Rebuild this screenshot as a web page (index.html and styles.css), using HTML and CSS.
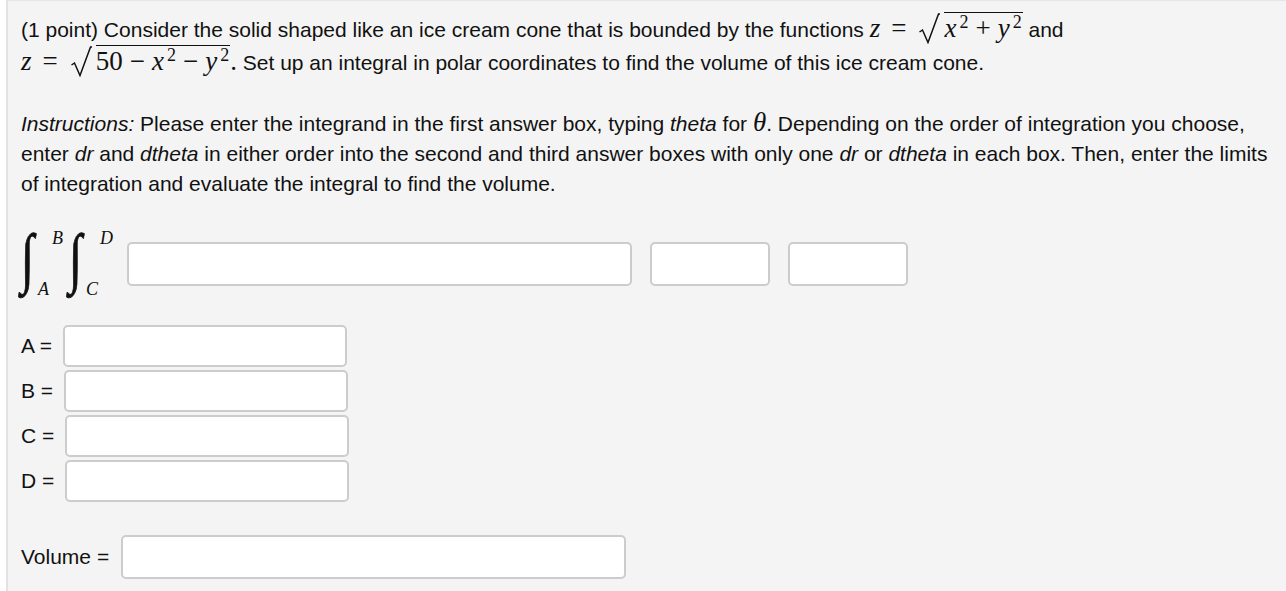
FILE: index.html
```html
<!DOCTYPE html>
<html>
<head>
<meta charset="utf-8">
<link rel="stylesheet" href="styles.css">
</head>
<body>
<div class="panel">
  <p class="problem">(1 point) Consider the solid shaped like an ice cream cone that is bounded by the functions <span class="m"><i>z</i><span class="rel">=</span><span class="rad"><svg class="rs" width="22" height="31" viewBox="0 0 22 31"><path d="M1.5 19 L4.5 17 L10 29.5 L20.5 1 L22 1" fill="none" stroke="#111" stroke-width="1.5" stroke-linejoin="miter"/></svg><span class="rc"><i>x</i><sup>2</sup><span class="bin">+</span><i>y</i><sup>2</sup></span></span></span> and<br><span class="m"><i>z</i><span class="rel">=</span><span class="rad"><svg class="rs" width="22" height="31" viewBox="0 0 22 31"><path d="M1.5 19 L4.5 17 L10 29.5 L20.5 1 L22 1" fill="none" stroke="#111" stroke-width="1.5" stroke-linejoin="miter"/></svg><span class="rc">50<span class="bin">−</span><i>x</i><sup>2</sup><span class="bin">−</span><i>y</i><sup>2</sup></span></span>.</span> Set up an integral in polar coordinates to find the volume of this ice cream cone.</p>
  <p class="instr"><i>Instructions:</i> Please enter the integrand in the first answer box, typing <i>theta</i> for <span class="m"><i>θ</i></span>. Depending on the order of integration you choose, enter <i>dr</i> and <i>dtheta</i> in either order into the second and third answer boxes with only one <i>dr</i> or <i>dtheta</i> in each box. Then, enter the limits of integration and evaluate the integral to find the volume.</p>
  <div class="integral-row">
    <span class="int"><span class="sym">∫</span><span class="up">B</span><span class="lo">A</span></span>
    <span class="int second"><span class="sym">∫</span><span class="up">D</span><span class="lo">C</span></span>
    <span class="box wide first"></span>
    <span class="box small"></span>
    <span class="box small"></span>
  </div>
  <div class="limits">
    <div class="lrow"><span class="lab">A =</span><span class="box lim"></span></div>
    <div class="lrow"><span class="lab">B =</span><span class="box lim"></span></div>
    <div class="lrow"><span class="lab">C =</span><span class="box lim"></span></div>
    <div class="lrow"><span class="lab">D =</span><span class="box lim"></span></div>
  </div>
  <div class="vrow"><span class="lab">Volume =</span><span class="box wide"></span></div>
</div>
</body>
</html>
```
FILE: styles.css
```css
html, body { margin: 0; padding: 0; background: #ffffff; }
body { font-family: "Liberation Sans", Arial, sans-serif; font-size: 21px; color: #111; }
.panel {
  margin-left: 6px;
  border-left: 2px solid #e2e2e2;
  border-top: 1px solid #e6e6e6;
  background: #f4f4f4;
  padding: 12px 13px 0 13px;
  min-height: 100vh;
  box-sizing: border-box;
}
p { margin: 0; }
.problem { line-height: 33px; }
.instr { line-height: 30px; margin-top: 30px; }
.m { font-family: "Liberation Serif", "DejaVu Serif", "Times New Roman", serif; font-size: 27px; line-height: 0; }
.m i { font-family: "Liberation Serif", "DejaVu Serif", serif; font-style: italic; }
.rel { display: inline-block; margin: 0 12px 0 11px; }
.bin { display: inline-block; margin: 0 7px; }
.m sup { font-size: 18px; vertical-align: 9px; line-height: 0; margin-left: 3px; }
.rad { white-space: nowrap; }
.rs { vertical-align: -7px; margin-right: 4px; }
.rc { border-top: 1.5px solid #111; padding-right: 1px; }
.integral-row { display: flex; align-items: center; margin-top: 32px; height: 66px; }
.int { position: relative; display: block; width: 48px; height: 66px; flex: none; font-family: "Liberation Serif", serif; font-style: italic; }
.int .sym { position: absolute; left: 0; top: -6px; font-size: 48px; font-style: normal; line-height: 1; transform: scaleY(1.38); transform-origin: top left; -webkit-text-stroke: 0.6px #111; }
.int .up { position: absolute; left: 31px; top: -2px; font-size: 18px; line-height: 1; }
.int .lo { position: absolute; left: 17px; top: 49px; font-size: 18px; line-height: 1; }
.box { display: block; flex: none; background: #fff; border: 2px solid #cccccc; border-radius: 5px; box-sizing: border-box; height: 44px; }
.box.wide { width: 505px; }
.box.first { margin-left: 10px; }
.box.small { width: 120px; margin-left: 18px; }
.limits { margin-top: 28px; display: flex; flex-direction: column; gap: 3px; }
.lrow { display: flex; align-items: center; }
.lab { white-space: nowrap; margin-right: 11px; }
.box.lim { width: 284px; height: 42px; }
.vrow { display: flex; align-items: center; margin-top: 33px; }
.vrow .lab { margin-right: 12px; }
```
